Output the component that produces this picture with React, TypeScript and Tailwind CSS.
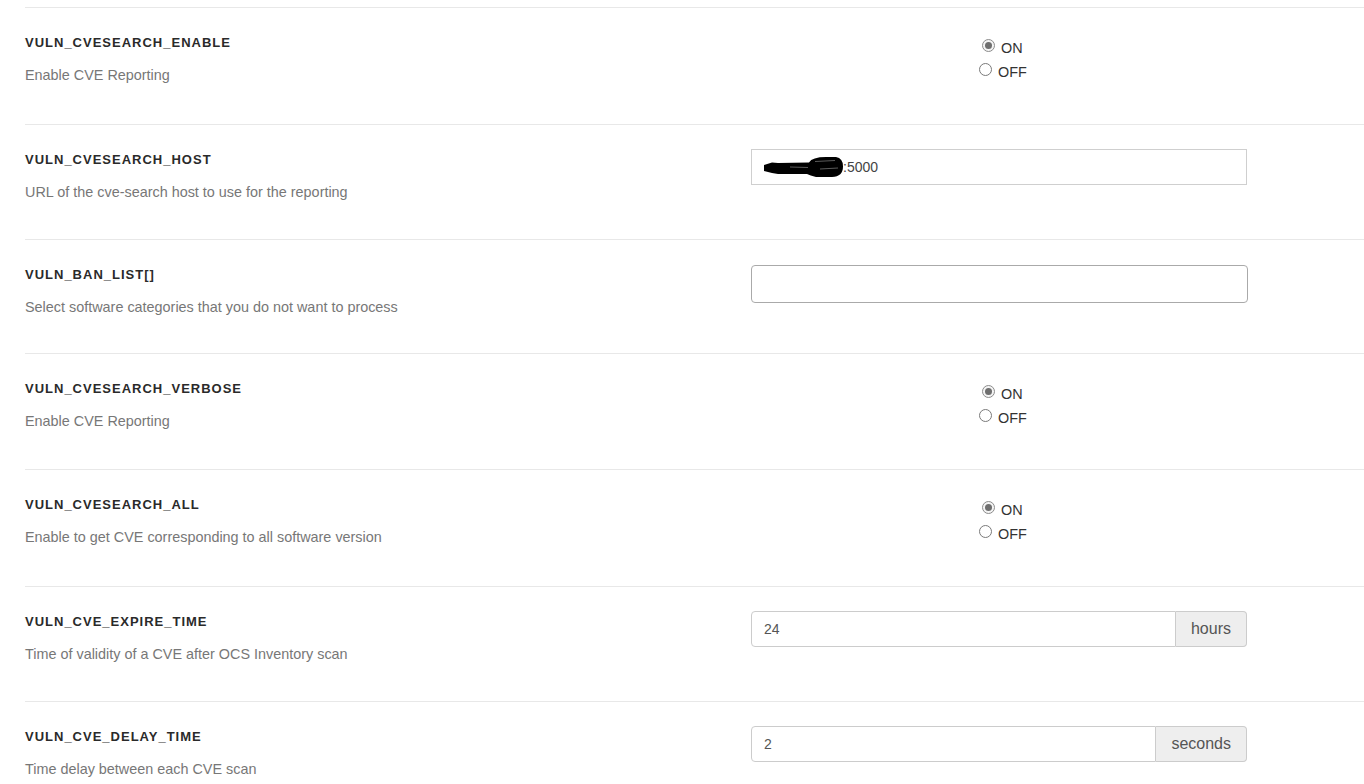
type Row = {
  name: string;
  desc: string;
  kind: "radio" | "text" | "select" | "addon";
  value?: string;
  unit?: string;
  h: string;
};

const rows: Row[] = [
  { name: "VULN_CVESEARCH_ENABLE", desc: "Enable CVE Reporting", kind: "radio", h: "h-[117px]" },
  { name: "VULN_CVESEARCH_HOST", desc: "URL of the cve-search host to use for the reporting", kind: "text", value: ":5000", h: "h-[115px]" },
  { name: "VULN_BAN_LIST[]", desc: "Select software categories that you do not want to process", kind: "select", h: "h-[114px]" },
  { name: "VULN_CVESEARCH_VERBOSE", desc: "Enable CVE Reporting", kind: "radio", h: "h-[116px]" },
  { name: "VULN_CVESEARCH_ALL", desc: "Enable to get CVE corresponding to all software version", kind: "radio", h: "h-[117px]" },
  { name: "VULN_CVE_EXPIRE_TIME", desc: "Time of validity of a CVE after OCS Inventory scan", kind: "addon", value: "24", unit: "hours", h: "h-[115px]" },
  { name: "VULN_CVE_DELAY_TIME", desc: "Time delay between each CVE scan", kind: "addon", value: "2", unit: "seconds", h: "h-[116px]" },
];

function Radio({ checked }: { checked?: boolean }) {
  return (
    <span
      className={
        checked
          ? "mt-[3px] flex h-[13px] w-[13px] shrink-0 items-center justify-center rounded-full border border-[#8c8c8c] bg-[#f4f4f4]"
          : "mt-[3px] flex h-[13px] w-[13px] shrink-0 items-center justify-center rounded-full border border-[#7a7a7a] bg-white"
      }
    >
      {checked && <span className="h-[7px] w-[7px] rounded-full bg-[#6e6e6e]" />}
    </span>
  );
}

function OnOff() {
  return (
    <div className="pl-[228px] pt-[28px] text-[14.4px] leading-[24px] text-[#333]">
      <div className="ml-[3px] flex items-start gap-[6px]">
        <Radio checked />
        <span>ON</span>
      </div>
      <div className="flex items-start gap-[6px]">
        <Radio />
        <span>OFF</span>
      </div>
    </div>
  );
}

// redaction mark over the host name
function Scribble() {
  return (
    <svg width="79" height="22" viewBox="0 0 79 22" className="shrink-0">
      <path
        d="M0 9 L8 6.5 L14 7 L45 6.5 Q48 1 62 1 L72 1 Q79 2 79 10.5 Q79 20.5 68 21 L52 21 Q46 19.5 43 18 L14 18 L8 17 L0 15 Z"
        fill="#000"
      />
      <path d="M51 5.5 L71 4.5 M56 13 L74 12 M26 11 L44 11.5" stroke="#fff" strokeWidth="0.8" fill="none" opacity="0.45" />
    </svg>
  );
}

function Control({ row }: { row: Row }) {
  if (row.kind === "radio") return <OnOff />;
  if (row.kind === "text")
    return (
      <div className="pt-[24px]">
        <div className="flex h-[36px] w-[496px] items-center border border-[#cfcfcf] bg-white pl-[12px] text-[14px] text-[#444]">
          <Scribble />
          <span>{row.value}</span>
        </div>
      </div>
    );
  if (row.kind === "select")
    return (
      <div className="pt-[25px]">
        <div className="h-[38px] w-[497px] rounded-[4px] border border-[#aaaaaa] bg-white" />
      </div>
    );
  return (
    <div className="pt-[24px]">
      <div className="flex h-[36px] w-[496px]">
        <div className="flex flex-1 items-center rounded-l-[4px] border border-[#cccccc] bg-white pl-[12px] text-[14px] text-[#555]">
          {row.value}
        </div>
        <div className="flex items-center rounded-r-[4px] border border-l-0 border-[#cccccc] bg-[#eeeeee] px-[15px] text-[16px] text-[#555]">
          {row.unit}
        </div>
      </div>
    </div>
  );
}

export default function App() {
  return (
    <div
      className="min-h-[784px] overflow-hidden bg-white pl-[25px] pt-[7px]"
      style={{ fontFamily: '"Liberation Sans", Arial, sans-serif' }}
    >
      {rows.map((row) => (
        <div key={row.name} className={`flex border-t border-[#e8e8e8] ${row.h}`}>
          <div className="w-[726px] shrink-0 pt-[26px]">
            <div className="text-[13px] font-bold leading-[18px] tracking-[1px] text-[#2a2a2a]">{row.name}</div>
            <div className="mt-[13px] text-[14.4px] leading-[20px] text-[#777]">{row.desc}</div>
          </div>
          <Control row={row} />
        </div>
      ))}
    </div>
  );
}
